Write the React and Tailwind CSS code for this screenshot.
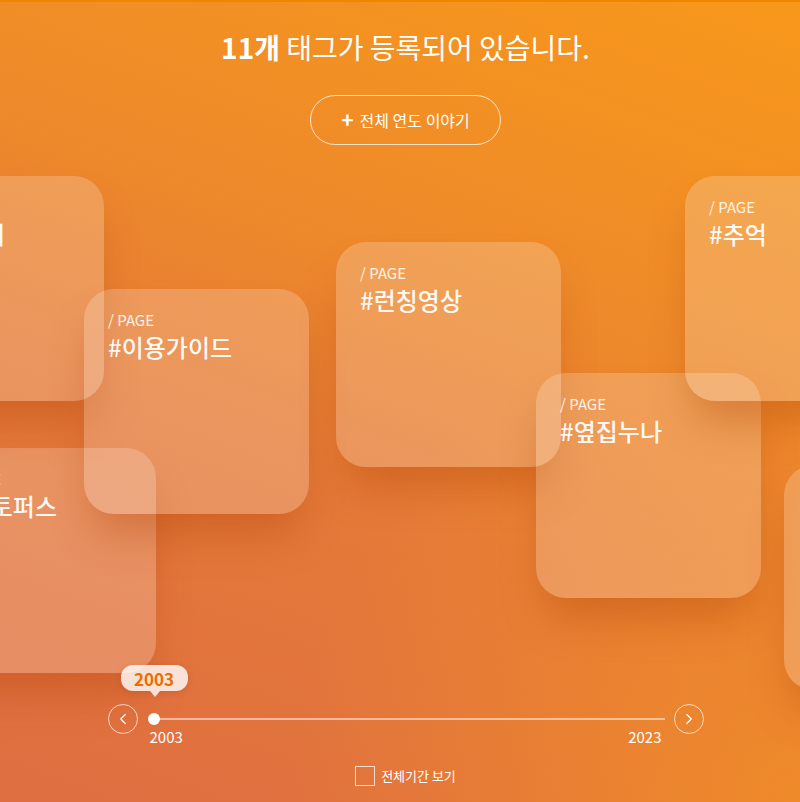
import React from 'react';
import { ChevronLeft, ChevronRight } from 'lucide-react';

const font = { fontFamily: '"Noto Sans CJK KR", "Noto Sans", sans-serif' };

// free canvas: card positions are the content
const cards = [
  { id: 'c6', title: '#스토퍼스', pos: 'left-[-69px] top-[448px]' },
  { id: 'c1', title: '#고객센터', pos: 'left-[-121px] top-[176px]' },
  { id: 'c2', title: '#이용가이드', pos: 'left-[84px] top-[289px]' },
  { id: 'c3', title: '#런칭영상', pos: 'left-[336px] top-[242px]' },
  { id: 'c5', title: '#옆집누나', pos: 'left-[536px] top-[373px]' },
  { id: 'c4', title: '#추억', pos: 'left-[685px] top-[176px]' },
  { id: 'c7', title: '#브랜드', pos: 'left-[784px] top-[465px]' },
];

const TagCard = ({ title, pos }) => (
  <div
    className={`absolute ${pos} w-[225px] h-[225px] rounded-[30px] bg-white/20 shadow-[0_28px_40px_-8px_rgba(170,60,0,0.35)] pl-6 pt-[21px] text-white`}
  >
    <p className="text-[15px] leading-5 text-white/85">/ PAGE</p>
    <p className="text-[24px] leading-[32px] font-medium mt-[1px] text-white/95">{title}</p>
  </div>
);

export default function App() {
  return (
    <div
      style={font}
      className="relative w-full h-[802px] overflow-hidden bg-[radial-gradient(ellipse_at_100%_100%,rgba(240,140,40,0.9)_0%,rgba(240,140,40,0)_45%),linear-gradient(200deg,#f8981a_0%,#ee8a2a_35%,#e57a38_60%,#df6e42_100%)]"
    >
      <div className="absolute inset-x-0 top-0 h-[2px] bg-[#f08600]" />
      <div className="absolute inset-0">
        {cards.map((c) => (
          <TagCard key={c.id} title={c.title} pos={c.pos} />
        ))}
      </div>

      <div className="relative flex flex-col h-full pl-[11px]">
        <h1 className="pt-[29px] text-center text-[28px] leading-9 text-white">
          <span className="font-bold">11개</span> 태그가 등록되어 있습니다.
        </h1>

        <div className="flex justify-center mt-[30px]">
          <button className="w-[191px] h-[50px] rounded-full border border-white/75 text-white text-[16px] flex items-center justify-center gap-1.5">
            <span className="text-[21px] font-bold leading-none -mt-[2px]">+</span>
            <span>전체 연도 이야기</span>
          </button>
        </div>

        <div className="flex-1" />

        <div className="pb-[16px] flex flex-col items-center">
          <div className="flex items-center h-[30px]">
            <button className="w-[30px] h-[30px] rounded-full border border-white/70 flex items-center justify-center text-white">
              <ChevronLeft size={18} strokeWidth={1.6} />
            </button>
            <div className="relative ml-[16px] w-[511px] h-[2px] bg-white/50">
              <div className="absolute left-[-6px] top-[-5px] w-3 h-3 rounded-full bg-white" />
              <div className="absolute left-[-33px] top-[-53px] w-[67px] h-[26px] rounded-[12px] bg-white/80 flex items-center justify-center shadow-[0_2px_6px_rgba(150,50,0,0.2)]">
                <span className="text-[17px] font-bold text-[#ee6c00] leading-none">2003</span>
                <div className="absolute left-[29px] bottom-[-6px] w-0 h-0 border-l-[5px] border-r-[5px] border-t-[6px] border-l-transparent border-r-transparent border-t-white/80" />
              </div>
              <span className="absolute left-[-4px] top-[9px] text-[15px] leading-5 text-white">2003</span>
              <span className="absolute right-[3px] top-[9px] text-[15px] leading-5 text-white">2023</span>
            </div>
            <button className="ml-[9px] w-[30px] h-[30px] rounded-full border border-white/70 flex items-center justify-center text-white">
              <ChevronRight size={18} strokeWidth={1.6} />
            </button>
          </div>

          <div className="flex items-center justify-center gap-[6px] mt-[32px]">
            <span className="w-5 h-5 border border-white/75" />
            <span className="text-[13px] text-white leading-5">전체기간 보기</span>
          </div>
        </div>
      </div>
    </div>
  );
}
